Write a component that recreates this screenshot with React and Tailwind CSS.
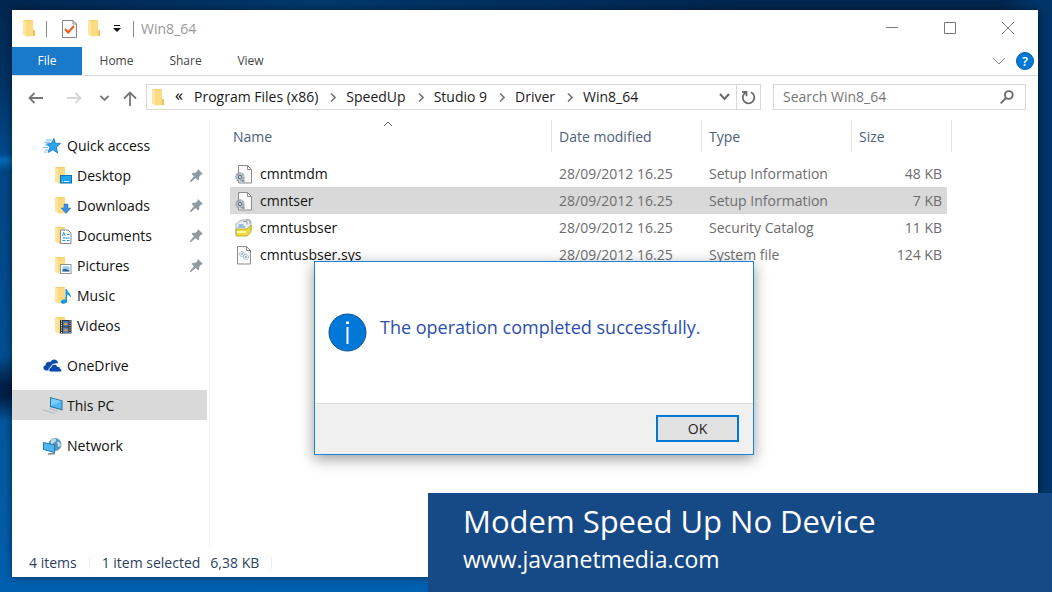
import { useState } from "react";

const quickItems = [
  { name: "Desktop", kind: "desktop", pinned: true },
  { name: "Downloads", kind: "downloads", pinned: true },
  { name: "Documents", kind: "documents", pinned: true },
  { name: "Pictures", kind: "pictures", pinned: true },
  { name: "Music", kind: "music", pinned: false },
  { name: "Videos", kind: "videos", pinned: false },
];

const files = [
  { name: "cmntmdm", date: "28/09/2012 16.25", type: "Setup Information", size: "48 KB", icon: "inf" },
  { name: "cmntser", date: "28/09/2012 16.25", type: "Setup Information", size: "7 KB", icon: "inf" },
  { name: "cmntusbser", date: "28/09/2012 16.25", type: "Security Catalog", size: "11 KB", icon: "cat" },
  { name: "cmntusbser.sys", date: "28/09/2012 16.25", type: "System file", size: "124 KB", icon: "sys" },
];

const crumbs = ["Program Files (x86)", "SpeedUp", "Studio 9", "Driver", "Win8_64"];

const FolderShape = () => (
  <>
    <path d="M0 0h10v10h2v6H3z" fill="#f5cf6b" />
    <path d="M0 0l3.500 1.500V16.500L0 14.500z" fill="#fbe5a0" />
    <path d="M3.500 1.500L10 .5V16l-6.500.5z" fill="#fbdb82" />
    <path d="M10 10h2v6h-2z" fill="#eec25c" />
  </>
);

const Folder = () => (
  <svg className="shrink-0" width="13" height="17" viewBox="0 0 13 17">
    <FolderShape />
  </svg>
);

const overlays = {
  desktop: (
    <>
      <rect x="5.500" y="8.500" width="11" height="7.500" fill="#1ea4f2" stroke="#0f6fb5" />
      <path d="M7 14.500h1M9 14.500h5" stroke="#fff" strokeWidth=".8" />
    </>
  ),
  downloads: <path d="M9 7h4v4h3l-5 5.500L6 11h3z" fill="#3c8fe0" stroke="#2a6fbd" strokeWidth=".5" />,
  documents: (
    <>
      <path d="M5.500 3h7.500l3 3v10.500H5.500z" fill="#fff" stroke="#7f8a93" />
      <path d="M7.500 9l1.200-3.500L10.300 9M12 7.500h2.500M7.500 11h7M7.500 13.500h3M12 13.500h2.500" fill="none" stroke="#1f8fdb" />
    </>
  ),
  pictures: (
    <>
      <rect x="5.500" y="7.500" width="10.500" height="9" fill="#fff" stroke="#8b949b" />
      <path d="M7.500 9.500h7v5h-7z" fill="#8fc6ee" />
      <path d="M7.500 14.500v-2l3-.5 4 1.500v1z" fill="#31618c" />
    </>
  ),
  music: (
    <path d="M10.500 2h1.300c.5 3.500 5 4.500 4 9-.5-2-2-3-3.800-3.500v6.500c0 2.800-5.500 4-6 1.200-.3-2.200 2.500-3.200 4.500-2.400z" fill="#1296ea" />
  ),
  videos: (
    <>
      <path d="M5 3h11.500v13.500H5z" fill="#343434" />
      <path d="M8 4h5.500v5.500H8z" fill="#3f78c9" />
      <path d="M8 10.500h5.500V16H8z" fill="#5b83b5" />
      <path d="M8.500 8l2-3 2.500 3zM9 14l1.500-2.500L13 14z" fill="#e0a13a" />
      <path d="M6.500 3.500v13M15 3.500v13" stroke="#fff" strokeDasharray="1 1.300" />
    </>
  ),
};

const SideFolder = ({ kind }) => (
  <svg className="shrink-0" width="18" height="18" viewBox="0 0 18 18">
    <FolderShape />
    {overlays[kind]}
  </svg>
);

const Pin = () => (
  <svg width="13" height="13" viewBox="0 0 13 13" fill="#8f9aa3">
    <path d="M8 0l5 5-2 .7-2 2.300c.5 1.300.3 2.500-.8 3.500L5.700 9 1 13H0v-1L4 7.300 1.500 4.800c1-1.200 2.500-1.300 3.700-.8L7.400 2z" />
  </svg>
);

const Star = () => (
  <svg className="shrink-0" width="18" height="16" viewBox="0 0 18 16">
    <path d="M11 .5l1.300 4.700 5.200.3-4.200 3.500 1.300 6-4.600-3.200L5 14.500l2-5.200L3.500 6l4.800-.6z" fill="#2ba5f0" stroke="#1474bf" strokeWidth=".8" />
    <path d="M3 2h6M1 4.200h6M2 7h3M0 9.500h5M2 12h3M1 14h2.500" stroke="#5cb2ea" strokeWidth=".9" />
  </svg>
);

const Cloud = () => (
  <svg className="shrink-0" width="19" height="14" viewBox="0 0 19 14">
    <path d="M6 11.500H3C-.3 11.200-.5 7 2.500 6.200 2.500 3.500 5.500 2 7.300 3.200 9-.8 14.500-.5 15 4L10 5z" fill="#0b4bb0" />
    <path d="M8 13c-3-.3-3-4.200 0-4.700.3-3.600 5.500-4.300 6.500-.8 2-.4 2.800.9 2.600 2 2.200.4 2 3.300 0 3.500z" fill="#0b4bb0" stroke="#fff" strokeWidth=".9" />
  </svg>
);

const Computer = () => (
  <svg className="shrink-0" width="20" height="18" viewBox="0 0 20 18">
    <path d="M7 0l12.500 3.500v10L7 10z" fill="#2f6f9e" />
    <path d="M8 1.300l10.500 3v8L8 9z" fill="#4fb9f7" />
    <path d="M8 1.300l10.500 3L8 9z" fill="#79cdfb" />
    <path d="M0 13l12 3.500M6 11.500l9 3" stroke="#a8b4bc" />
  </svg>
);

const Network = () => (
  <svg className="shrink-0" width="19" height="18" viewBox="0 0 19 18">
    <circle cx="12" cy="7.500" r="6.500" fill="#5794b8" />
    <path d="M8 3c3-3 6-1 5 1s-3 1-3 3-3 1-2-4zM14 5c3-1 4 2 4 4l-3 1z" fill="#b9dcea" />
    <path d="M.5 5.500l11 2.500v7.500l-11-3z" fill="#4fb9f7" stroke="#2577ae" />
    <path d="M5 17l6-1 1 1z" fill="#7d8a93" stroke="#7d8a93" />
  </svg>
);

const FileIcon = ({ kind }) => {
  if (kind === "cat") {
    return (
      <svg className="shrink-0" width="18" height="19" viewBox="0 0 18 19">
        <path d="M5 1.500l8-1 3 2V11l-3 4H1V5z" fill="#e9edf0" stroke="#98a2a8" strokeWidth=".8" />
        <path d="M1 10h11l4-4v7l-4 4H1z" fill="#ecdc3c" stroke="#b3a228" strokeWidth=".8" />
        <path d="M3.500 6h5M3 8h7" stroke="#4f8fd0" />
        <path d="M2 13h9" stroke="#fff8b8" strokeWidth="2" />
        <path d="M8 2.500h4v3M11 1h4v4" stroke="#98a2a8" fill="none" />
      </svg>
    );
  }
  return (
    <svg className="shrink-0" width="18" height="19" viewBox="0 0 18 19">
      <path d={kind === "sys" ? "M2.500.5h9l4 4v13.500h-13z" : "M3.500.5h9l4 4v13.500h-13z"} fill="#fafafa" stroke="#8c8c8c" />
      <path d={kind === "sys" ? "M11.500.5v4h4" : "M12.500.5v4h4"} fill="none" stroke="#8c8c8c" />
      {kind === "sys" ? (
        <g fill="#fff" stroke="#8aa5b8">
          <circle cx="7" cy="8" r="2.500" strokeDasharray="1.200 .5" />
          <circle cx="7" cy="8" r=".8" />
          <circle cx="11" cy="11" r="2.500" strokeDasharray="1.200 .5" />
          <circle cx="11" cy="11" r=".8" />
        </g>
      ) : (
        <g fill="none">
          <circle cx="5" cy="12" r="3.300" stroke="#a3adb5" strokeWidth="3" strokeDasharray="2.400 .4" />
          <circle cx="5" cy="12" r="1.600" fill="#dde4e8" stroke="#5f6d76" />
          <path d="M7 14.500h2.500v2.500H7z" fill="#8d99a2" />
        </g>
      )}
    </svg>
  );
};

const Chevron = ({ className, d = "M1 1l4 4 4-4", w = 10, h = 6, stroke = 1 }) => (
  <svg className={className} width={w} height={h} viewBox={`0 0 ${w} ${h}`} fill="none" stroke="currentColor" strokeWidth={stroke}>
    <path d={d} />
  </svg>
);

function TitleBar() {
  return (
    <header className="flex h-[37px] shrink-0 items-center pl-[11px]">
      <Folder />
      <span className="ml-[10px] h-4 w-px bg-[#8a8a8a]" />
      <button aria-label="Properties" className="ml-[15px]">
        <svg width="15" height="18" viewBox="0 0 15 18" fill="none">
          <path d="M.5.500h10.500l3.500 3.500v13.500H.5z" fill="#fafafa" stroke="#848484" />
          <path d="M11 .5V4h3.500" stroke="#848484" />
          <path d="M3 9l3.200 3.500L12 6" stroke="#ea5a1c" strokeWidth="2" />
        </svg>
      </button>
      <button aria-label="New folder" className="ml-[11px]">
        <Folder />
      </button>
      <button aria-label="Customize toolbar" className="ml-3">
        <svg width="8" height="7" viewBox="0 0 8 7">
          <path d="M1 0h6v1H1zM0 3h8L4 7z" fill="#111" />
        </svg>
      </button>
      <span className="ml-3 h-4 w-px bg-[#8a8a8a]" />
      <h1 className="ml-[7px] text-sm text-[#999]">Win8_64</h1>
      <div className="ml-auto flex items-center gap-[46px] pr-6 pb-px text-[#777]">
        <button aria-label="Minimize">
          <svg width="12" height="12" viewBox="0 0 12 12"><path d="M0 5.500h12" stroke="currentColor" /></svg>
        </button>
        <button aria-label="Maximize">
          <svg width="12" height="12" viewBox="0 0 12 12"><path d="M.5.500h11v11H.5z" fill="none" stroke="currentColor" /></svg>
        </button>
        <button aria-label="Close">
          <svg width="12" height="12" viewBox="0 0 12 12"><path d="M0 0l12 12M12 0L0 12" stroke="currentColor" /></svg>
        </button>
      </div>
    </header>
  );
}

function Ribbon() {
  return (
    <nav className="flex h-[29px] shrink-0 items-center border-b border-[#dadbdc] text-xs text-[#444]">
      <button className="h-full w-[70px] bg-[#1979ca] text-white">File</button>
      <button className="w-[69px]">Home</button>
      <button className="w-[69px]">Share</button>
      <button className="w-[61px]">View</button>
      <button aria-label="Expand ribbon" className="mr-[10px] ml-auto text-[#8a8a8a]">
        <Chevron w={14} h={8} d="M1 1l6 6 6-6" />
      </button>
      <button aria-label="Help" className="mr-1 h-[18px] w-[18px] rounded-full border border-[#0a5ea8] bg-[#0078d7] text-[13px] leading-4 font-semibold text-white">
        ?
      </button>
    </nav>
  );
}

function AddressRow() {
  return (
    <div className="flex h-[44px] shrink-0 items-start pt-2 pr-[12px] pl-4">
      <div className="flex h-7 items-center text-[#767676]">
        <button aria-label="Back">
          <svg width="16" height="12" viewBox="0 0 16 12" fill="none" stroke="currentColor" strokeWidth="1.800"><path d="M15 6H1.500M6.500 1l-5 5 5 5" /></svg>
        </button>
        <button aria-label="Forward" className="ml-[22px] text-[#d6d6d6]">
          <svg width="16" height="12" viewBox="0 0 16 12" fill="none" stroke="currentColor" strokeWidth="1.800"><path d="M1 6h13.500M9.500 1l5 5-5 5" /></svg>
        </button>
        <button aria-label="Recent locations" className="ml-[18px]">
          <Chevron w={9} h={6} d="M.5 1l4 4 4-4" stroke={1.8} />
        </button>
        <button aria-label="Up" className="ml-[14px]">
          <svg width="14" height="15" viewBox="0 0 14 15" fill="none" stroke="currentColor" strokeWidth="1.800"><path d="M7 15V1.500M1 7.500l6-6 6 6" /></svg>
        </button>
      </div>
      <div className="ml-[9px] flex h-[26px] flex-1 items-center border border-[#d9d9d9] pl-[5px]">
        <Folder />
        <span className="ml-[10px] w-[19px] pb-1 text-base leading-5">«</span>
        <ol className="flex items-center">
          {crumbs.map((crumb, i) => (
            <li key={crumb} className="flex items-center">
              {i > 0 && <Chevron className="mr-[10px] ml-3 text-[#777]" w={6} h={9} d="M1 .500l4 4-4 4" stroke={1.6} />}
              <a href="#" className="text-sm text-[#1a1a1a]">{crumb}</a>
            </li>
          ))}
        </ol>
        <button aria-label="Previous locations" className="mr-[6px] ml-auto text-[#6a6a6a]">
          <Chevron w={11} h={8} d="M1 1l4.500 5 4.500-5" stroke={2} />
        </button>
        <button aria-label="Refresh" className="flex h-full w-6 items-center justify-center border-l border-[#d9d9d9] text-[#6a6a6a]">
          <svg width="15" height="15" viewBox="0 0 15 15" fill="none" stroke="currentColor" strokeWidth="1.800">
            <path d="M10 2.300a5.800 5.800 0 1 1-5.300.2M1 1.800h4.500v4.500" />
          </svg>
        </button>
      </div>
      <div className="ml-3 flex h-[26px] w-[253px] items-center border border-[#d9d9d9] pr-[11px] pl-[9px]">
        <input
          type="text"
          aria-label="Search Win8_64"
          placeholder="Search Win8_64"
          className="min-w-0 flex-1 text-sm outline-none placeholder:text-[#767676]"
        />
        <svg width="14" height="14" viewBox="0 0 14 14" fill="none" stroke="#6a6a6a" strokeWidth="1.900">
          <circle cx="8.800" cy="5" r="3.900" />
          <path d="M6 8l-5.300 5.300" />
        </svg>
      </div>
    </div>
  );
}

function RootItem({ icon, label, active }) {
  return (
    <a href="#" className={active ? "flex h-[30px] items-center bg-[#d9d9d9] pt-px pl-[31px]" : "flex h-[30px] items-center pt-px pl-[31px]"}>
      <span className="flex w-6 items-center">{icon}</span>
      {label}
    </a>
  );
}

function Sidebar() {
  return (
    <nav className="w-[198px] shrink-0 border-r border-[#f3f3f3] pt-[10px] pr-[2px] text-sm text-[#111]">
      <RootItem icon={<Star />} label="Quick access" />
      <ul className="mb-[10px]">
        {quickItems.map((item) => (
          <li key={item.name}>
            <a href="#" className="flex h-[30px] items-center pt-px pr-1 pl-[43px]">
              <SideFolder kind={item.kind} />
              <span className="ml-1 flex-1">{item.name}</span>
              {item.pinned && <Pin />}
            </a>
          </li>
        ))}
      </ul>
      <div className="flex flex-col gap-[10px]">
        <RootItem icon={<Cloud />} label="OneDrive" />
        <RootItem icon={<Computer />} label="This PC" active />
        <RootItem icon={<Network />} label="Network" />
      </div>
    </nav>
  );
}

function FileTable() {
  const [selected, setSelected] = useState("cmntser");

  return (
    <main className="min-w-0 flex-1 pl-5">
      <table className="w-[722px] table-fixed border-collapse text-left text-sm text-[#6d6d6d]">
        <colgroup>
          <col className="w-[322px]" />
          <col className="w-[150px]" />
          <col className="w-[150px]" />
          <col className="w-[95px]" />
          <col className="w-[5px]" />
        </colgroup>
        <thead className="text-[#4c607a]">
          <tr className="h-10 align-top">
            <th className="p-0 font-normal">
              <div className="relative h-8 border-r border-[#e5e5e5] pt-px pl-[3px] leading-8">
                Name
                <Chevron className="absolute top-px left-[153px] text-[#555]" d="M1 5l4-4 4 4" />
              </div>
            </th>
            <th className="p-0 font-normal"><div className="h-8 border-r border-[#e5e5e5] pt-px pl-[7px] leading-8">Date modified</div></th>
            <th className="p-0 font-normal"><div className="h-8 border-r border-[#e5e5e5] pt-px pl-[7px] leading-8">Type</div></th>
            <th colSpan={2} className="p-0 font-normal"><div className="h-8 border-r border-[#e5e5e5] pt-px pl-[7px] leading-8">Size</div></th>
          </tr>
        </thead>
        <tbody>
          {files.map((file) => {
            const cell = selected === file.name ? "bg-[#d9d9d9] p-0 pt-px" : "p-0 pt-px";
            return (
              <tr key={file.name} onClick={() => setSelected(file.name)} className="h-[27px]">
                <td className={cell}>
                  <div className="flex items-center gap-[7px] pl-[5px] text-[#111]">
                    <FileIcon kind={file.icon} />
                    {file.name}
                  </div>
                </td>
                <td className={cell}><div className="pl-[7px]">{file.date}</div></td>
                <td className={cell}><div className="pl-[7px]">{file.type}</div></td>
                <td className={cell}><div className="pr-[5px] text-right">{file.size}</div></td>
              </tr>
            );
          })}
        </tbody>
      </table>
    </main>
  );
}

function StatusBar() {
  return (
    <footer className="flex h-[29px] shrink-0 items-center pl-[17px] text-sm text-[#2b3f5c]">
      <span>4 items</span>
      <span className="ml-3 h-3 w-px bg-[#ececec]" />
      <span className="ml-3">1 item selected</span>
      <span className="ml-[10px]">6,38 KB</span>
      <span className="ml-3 h-3 w-px bg-[#ececec]" />
    </footer>
  );
}

function MessageDialog({ onClose }) {
  return (
    <div
      role="dialog"
      aria-label="Message"
      className="absolute top-[261px] left-[314px] flex h-[194px] w-[440px] flex-col border border-[#1883d7] bg-white shadow-[0_4px_14px_rgba(0,0,0,0.4)]"
    >
      <div className="flex flex-1 items-center gap-[13px] pl-[13px]">
        <svg className="shrink-0" width="39" height="39" viewBox="0 0 39 39">
          <circle cx="19.500" cy="19.500" r="18.500" fill="#0078d7" stroke="#0a5493" />
          <path d="M18 8.500h3v2.500h-3zM18.500 14h2v17h-2z" fill="#fff" />
        </svg>
        <p className="pb-3 text-lg text-[#2b4fae]">The operation completed successfully.</p>
      </div>
      <div className="flex h-[51px] items-center justify-end border-t border-[#dfdfdf] bg-[#f0f0f0] pr-[14px] pb-px">
        <button onClick={onClose} className="h-[27px] w-[83px] border-2 border-[#0078d7] bg-[#e1e1e1] text-sm leading-5 text-[#222]">
          OK
        </button>
      </div>
    </div>
  );
}

export default function App() {
  const [open, setOpen] = useState(true);

  return (
    <div className="flex min-h-screen flex-col bg-[linear-gradient(to_bottom,#00264f,#003467_15%,#004a8c_26%,#0069b8_27%,#004684_29%,#004f92_60%,#001f47_65%,#001f47_67%,#00569c_71%,#0060b0)] font-['Open_Sans','Noto_Sans',sans-serif]">
      <div className="relative flex flex-1 flex-col bg-[linear-gradient(to_right,transparent_95%,#003468_98%),linear-gradient(to_right,transparent,#00396e_30%,transparent_70%)] bg-[length:100%_100%,100%_10px] bg-no-repeat pt-[10px] pr-[14px] pb-[15px] pl-3">
        <div className="flex flex-1 flex-col bg-white shadow-[0_0_8px_rgba(0,0,0,0.5)]">
          <TitleBar />
          <Ribbon />
          <AddressRow />
          <div className="flex flex-1">
            <Sidebar />
            <FileTable />
          </div>
          <StatusBar />
        </div>
        {open && <MessageDialog onClose={() => setOpen(false)} />}
        <aside className="absolute right-0 bottom-0 left-[428px] h-[99px] bg-[#164a86] pt-2 pl-[35px] text-white">
          <p className="text-[31px] leading-10">Modem Speed Up No Device</p>
          <p className="text-[23px] leading-9">www.javanetmedia.com</p>
        </aside>
      </div>
    </div>
  );
}
